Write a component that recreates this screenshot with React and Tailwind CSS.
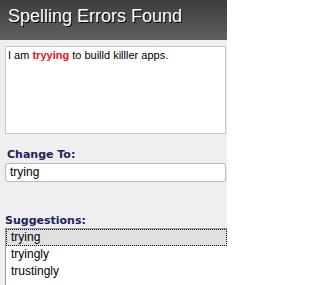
import React from "react";

const suggestions = ["trying", "tryingly", "trustingly"];

export default function App() {
  return (
    <div className="w-[227px] h-[285px] overflow-hidden bg-[#efefef] font-['DejaVu_Sans',sans-serif]">
      {/* Header */}
      <div className="h-[40px] bg-gradient-to-b from-[#3c3c3c] to-[#616161] pl-[8px] pt-[5px]">
        <h1 className="text-[18px] leading-[23px] text-white [text-shadow:1px_1px_0_#000] font-['Liberation_Sans',sans-serif]">
          Spelling Errors Found
        </h1>
      </div>

      {/* Text preview */}
      <div className="ml-[5px] w-[221px] mt-[6px] h-[88px] bg-white border border-[#c8c8c8] px-[2px] pt-[1px] text-[11px] leading-[14px] text-black font-['Liberation_Sans',sans-serif]">
        I am <span className="font-bold text-[#e8101c]">tryying</span> to builld killler apps.
      </div>

      {/* Change To */}
      <div className="mt-[15px] px-[7px] text-[11px] leading-[12px] font-bold text-[#1c1f5c]">
        Change To:
      </div>
      <div className="ml-[5px] w-[221px] mt-[2px] h-[19px] bg-white border border-[#b8b8b8] rounded-[3px] px-[4px] text-[12px] leading-[17px] text-black font-['Liberation_Sans',sans-serif]">
        trying
      </div>

      {/* Suggestions */}
      <div className="mt-[33px] px-[5px] text-[11px] leading-[12px] font-bold text-[#1c1f5c]">
        Suggestions:
      </div>
      <div className="ml-[5px] mt-[1px] h-[60px] bg-white border-l border-t border-[#9a9a9a] font-['Liberation_Sans',sans-serif] text-[12px] text-black">
        {suggestions.map((s, i) => (
          <div
            key={s}
            className={
              i === 0
                ? "h-[17px] leading-[15px] pl-[4px] bg-[#e1e1e1] border border-dotted border-black"
                : "h-[17px] leading-[17px] pl-[5px]"
            }
          >
            {s}
          </div>
        ))}
      </div>
    </div>
  );
}
